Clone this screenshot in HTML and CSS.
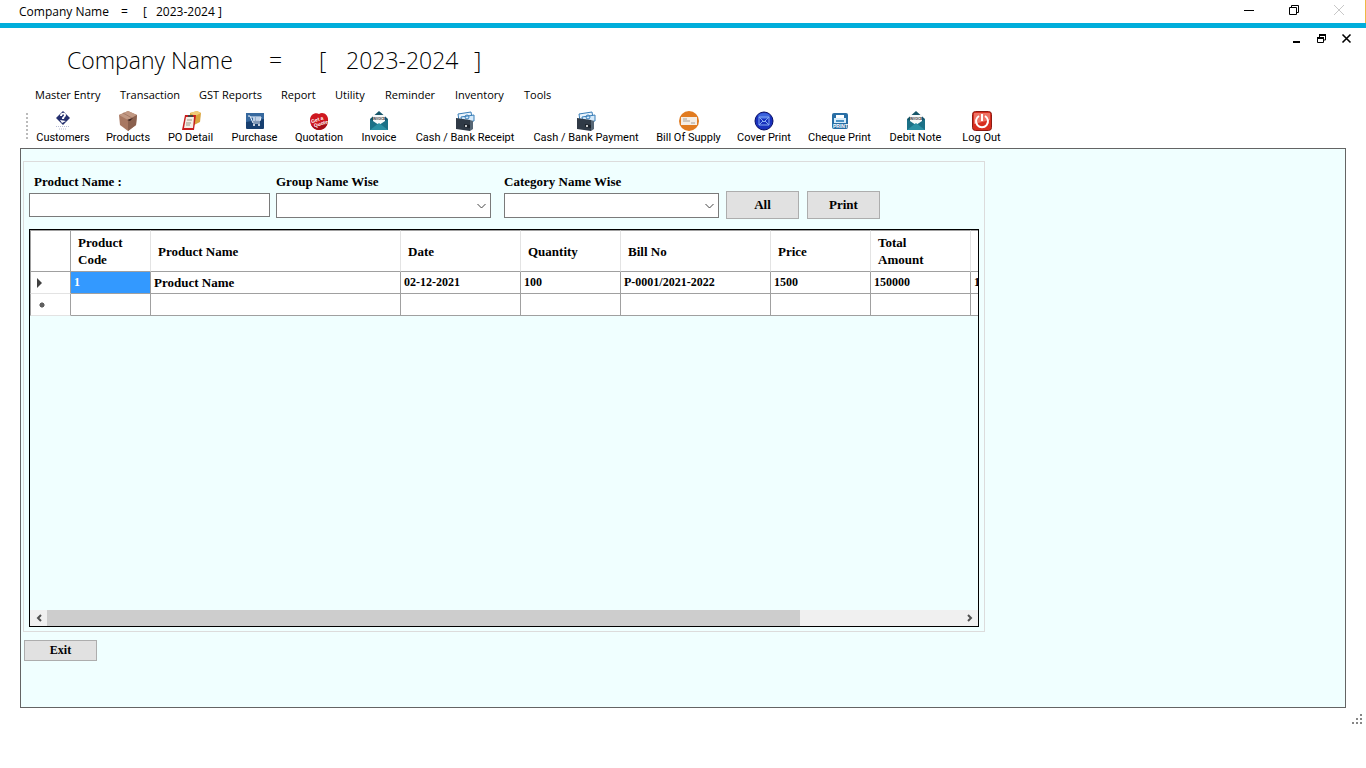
FILE: index.html
```html
<!DOCTYPE html>
<html lang="en">
<head>
    <meta charset="UTF-8">
    <meta name="viewport" content="width=device-width, initial-scale=1.0">
    <title>Company Name = [ 2023-2024 ]</title>
    <link rel="stylesheet" href="styles.css">
</head>
<body>
    <div class="titlebar">
        <div class="caption">
            <span>Company Name</span><span>=</span><span>[</span><span>2023-2024</span><span>]</span>
        </div>
        <div class="window-buttons">
            <button type="button" aria-label="Minimize"><svg width="12" height="12" viewBox="0 0 12 12"><path d="M1 6.500h10" stroke="#000" fill="none"/></svg></button>
            <button type="button" aria-label="Restore"><svg width="12" height="12" viewBox="0 0 12 12"><path d="M1.500 3.500h7v7h-7zM3.500 3.500v-2h7v7h-2" stroke="#000" fill="none"/></svg></button>
            <button type="button" aria-label="Close" disabled><svg width="12" height="12" viewBox="0 0 12 12"><path d="M1 1l10 10M11 1L1 11" stroke="#c8c8c8" fill="none"/></svg></button>
        </div>
    </div>

    <header>
        <div class="heading">
            <h1><span>Company Name</span><span>=</span><span>[</span><span>2023-2024</span><span>]</span></h1>
            <div class="child-buttons">
                <button type="button" aria-label="Minimize child"><svg width="11" height="11" viewBox="0 0 11 11"><path d="M2 9h7" stroke="#000" stroke-width="2"/></svg></button>
                <button type="button" aria-label="Restore child"><svg width="11" height="11" viewBox="0 0 11 11"><path d="M3.500 4V2h6v5H8M1.500 5v4.500h6V5" stroke="#000" fill="none"/><path d="M3 2h7M1 5h7" stroke="#000" stroke-width="2"/></svg></button>
                <button type="button" aria-label="Close child"><svg width="11" height="11" viewBox="0 0 11 11"><path d="M1.500 1.500l8 8M9.500 1.500l-8 8" stroke="#000" stroke-width="1.600"/></svg></button>
            </div>
        </div>

        <nav class="menu">
            <a href="#">Master Entry</a>
            <a href="#">Transaction</a>
            <a href="#">GST Reports</a>
            <a href="#">Report</a>
            <a href="#">Utility</a>
            <a href="#">Reminder</a>
            <a href="#">Inventory</a>
            <a href="#">Tools</a>
        </nav>

        <div class="toolbar">
            <span class="grip"></span>
            <button type="button">
                <svg viewBox="0 0 20 20"><path d="M10 0l7 7-7 7-7-7z" fill="#25306f"/><path d="M7 5c0-4 6-4 6-1 0 2-2 2-2 4H9c0-3 2-2 2-4-1-2-2 0-2 1zM7 9l6 1-4 2z" fill="#fff"/><path d="M3 15.500h14M6 18h8" stroke="#b8bdd4" stroke-dasharray="1 1"/></svg>
                Customers
            </button>
            <button type="button">
                <svg viewBox="0 0 20 20"><path d="M1 4l9-4 9 4-1 10-8 6-8-6z" fill="#a87862"/><path d="M1 4l9-4 9 4-9 5z" fill="#c19883"/><path d="M10 9l9-5-1 10-8 6z" fill="#8a604e"/><path d="M5 2l9 5" stroke="#a57a67"/><path d="M9 9l6-2-3 3" fill="#3b2520"/></svg>
                Products
            </button>
            <button type="button">
                <svg viewBox="0 0 20 20"><path d="M9 2l7-2 4 2-1 9-6 3-4-3z" fill="#d9a33c"/><path d="M9 2l7-2 4 2-6 3z" fill="#f0cc79"/><path d="M4 4h11l-2 15H1z" fill="#c71d1d"/><path d="M5 6h8l-1 11H3z" fill="#f4eee6"/><path d="M7 4h5v2H7z" fill="#444"/><path d="M6 9h5M5 12h5M5 14h4" stroke="#998"/></svg>
                PO Detail
            </button>
            <button type="button">
                <svg viewBox="0 0 20 20"><rect x="1" y="2" width="18" height="16" rx="1" fill="#173f70"/><path d="M1 2h18v6L1 11z" fill="#36689e"/><path d="M3 5h2l3 7h7M6 6h10l-1 4H8M8 8h8M9 6v4M12 6v4M14 6v4" stroke="#eef5ff" fill="none"/><circle cx="9" cy="14" r="1" fill="#fff"/><circle cx="14" cy="14" r="1" fill="#fff"/></svg>
                Purchase
            </button>
            <button type="button">
                <svg viewBox="0 0 20 20"><path d="M10 3C14 0 20 4 19 10c0 5-4 9-9 9S1 15 1 9c0-5 5-8 9-6z" fill="#cf1820"/><path d="M2 14c5 3 12-1 17-5 0 6-4 10-9 10-3 0-6-2-8-5z" fill="#a40e17"/><text x="2" y="11" class="badge-text" transform="rotate(-18 6 9)">Get a</text><text x="5" y="15" class="badge-text" transform="rotate(-18 10 14)">Quote</text></svg>
                Quotation
            </button>
            <button type="button">
                <svg viewBox="0 0 20 20"><path d="M1 8l9-8 9 8v11H1z" fill="#16566a"/><path d="M4 4h12v9H4z" fill="#f7f9f9"/><path d="M1 8l9 6 9-6v11H1z" fill="#1b7187"/><path d="M1 19l9-7 9 7z" fill="#2b90a4"/><text x="4" y="9" class="letter-text">INVOICE</text></svg>
                Invoice
            </button>
            <button type="button">
                <svg viewBox="0 0 20 20"><path d="M3 3l13-2 1 6-13 3z" fill="#eaf4fc" stroke="#397eb8"/><path d="M6 6l13-2v6L7 12z" fill="#d7ebfb" stroke="#397eb8"/><circle cx="12" cy="6" r="2" fill="none" stroke="#397eb8"/><path d="M1 7l14 2v11L1 18z" fill="#303a46"/><path d="M9 13l6 1v3l-6-1z" fill="#1b222a"/><circle cx="11" cy="15" r="1" fill="#fff"/><path d="M15 9l3 1v8l-3 2z" fill="#566675"/></svg>
                Cash / Bank Receipt
            </button>
            <button type="button">
                <svg viewBox="0 0 20 20"><path d="M3 3l13-2 1 6-13 3z" fill="#eaf4fc" stroke="#397eb8"/><path d="M6 6l13-2v6L7 12z" fill="#d7ebfb" stroke="#397eb8"/><circle cx="12" cy="6" r="2" fill="none" stroke="#397eb8"/><path d="M1 7l14 2v11L1 18z" fill="#303a46"/><path d="M9 13l6 1v3l-6-1z" fill="#1b222a"/><circle cx="11" cy="15" r="1" fill="#fff"/><path d="M15 9l3 1v8l-3 2z" fill="#566675"/></svg>
                Cash / Bank Payment
            </button>
            <button type="button">
                <svg viewBox="0 0 20 20"><circle cx="10" cy="10" r="10" fill="#e17b20"/><path d="M2 6h16v8H2z" fill="#f5ede4"/><path d="M4 8h4M4 10h7M12 12h4" stroke="#aaa096"/></svg>
                Bill Of Supply
            </button>
            <button type="button">
                <svg viewBox="0 0 20 20"><circle cx="10" cy="10" r="9" fill="#1830bd" stroke="#080f65"/><ellipse cx="10" cy="5" rx="6" ry="3" fill="#3a62dd"/><path d="M5 6h10v8H5zM5 6l5 5 5-5M5 14l4-4M15 14l-4-4" stroke="#85aaf2" fill="none"/></svg>
                Cover Print
            </button>
            <button type="button">
                <svg viewBox="0 0 20 20"><rect x="2" y="2" width="16" height="16" rx="2" fill="#286ea5"/><path d="M6 4h8v4H6z" fill="#fff"/><path d="M4 7h12v5H4z" fill="#d9eefb"/><path d="M6 9h8v2H6z" fill="#4b91c3"/><text x="3" y="17" class="print-text">PRINT</text></svg>
                Cheque Print
            </button>
            <button type="button">
                <svg viewBox="0 0 20 20"><path d="M1 8l9-8 9 8v11H1z" fill="#16566a"/><path d="M4 4h12v9H4z" fill="#f7f9f9"/><path d="M1 8l9 6 9-6v11H1z" fill="#1b7187"/><path d="M1 19l9-7 9 7z" fill="#2b90a4"/><text x="4" y="9" class="letter-text">INVOICE</text></svg>
                Debit Note
            </button>
            <button type="button">
                <svg viewBox="0 0 20 20"><rect x=".5" y=".5" width="19" height="19" rx="3" fill="#d72d1e" stroke="#8c1b13"/><path d="M2 2h16v7L2 13z" fill="#ee7365"/><path d="M7 5a6 6 0 1 0 6 0M10 3v7" stroke="#fff" stroke-width="2" fill="none"/></svg>
                Log Out
            </button>
        </div>
    </header>

    <main>
        <section class="group">
            <form class="filters">
                <div class="field">
                    <label for="product" class="indent">Product Name :</label>
                    <input type="text" id="product">
                </div>
                <div class="field">
                    <label for="group">Group Name Wise</label>
                    <div class="combo">
                        <select id="group"><option></option></select>
                        <svg width="9" height="6" viewBox="0 0 9 6"><path d="M.5 1l4 4 4-4" stroke="#444" fill="none"/></svg>
                    </div>
                </div>
                <div class="field category">
                    <label for="category">Category Name Wise</label>
                    <div class="combo">
                        <select id="category"><option></option></select>
                        <svg width="9" height="6" viewBox="0 0 9 6"><path d="M.5 1l4 4 4-4" stroke="#444" fill="none"/></svg>
                    </div>
                </div>
                <div class="actions">
                    <button type="button" class="btn">All</button>
                    <button type="button" class="btn">Print</button>
                </div>
            </form>

            <div class="grid">
                <div class="grid-body">
                    <table>
                        <colgroup>
                            <col class="c-mark"><col class="c-code"><col class="c-name"><col class="c-date"><col class="c-num"><col class="c-bill"><col class="c-num"><col class="c-num"><col class="c-num">
                        </colgroup>
                        <thead>
                            <tr>
                                <th></th>
                                <th>Product Code</th>
                                <th>Product Name</th>
                                <th>Date</th>
                                <th>Quantity</th>
                                <th>Bill No</th>
                                <th>Price</th>
                                <th>Total Amount</th>
                                <th></th>
                            </tr>
                        </thead>
                        <tbody>
                            <tr>
                                <td class="mark"><svg width="5" height="10" viewBox="0 0 5 10"><path d="M0 0l5 5-5 5z" fill="#404040"/></svg></td>
                                <td class="selected">1</td>
                                <td class="name">Product Name</td>
                                <td>02-12-2021</td>
                                <td>100</td>
                                <td>P-0001/2021-2022</td>
                                <td>1500</td>
                                <td>150000</td>
                                <td>1</td>
                            </tr>
                            <tr>
                                <td class="mark new"><svg width="6" height="6" viewBox="0 0 6 6"><circle cx="3" cy="3" r="2" fill="#404040"/><path d="M3 0v6M0 3h6M1 1l4 4M5 1L1 5" stroke="#606060"/></svg></td>
                                <td></td><td></td><td></td><td></td><td></td><td></td><td></td><td></td>
                            </tr>
                        </tbody>
                    </table>
                </div>
                <div class="scrollbar">
                    <button type="button" aria-label="Scroll left"><svg width="6" height="8" viewBox="0 0 6 8"><path d="M5 1L2 4l3 3" stroke="#505050" stroke-width="2" fill="none"/></svg></button>
                    <div class="track"><div class="thumb"></div></div>
                    <button type="button" aria-label="Scroll right"><svg width="6" height="8" viewBox="0 0 6 8"><path d="M1 1l3 3-3 3" stroke="#505050" stroke-width="2" fill="none"/></svg></button>
                </div>
            </div>
        </section>
        <button type="button" class="btn exit">Exit</button>
    </main>

    <footer>
        <svg width="10" height="10" viewBox="0 0 10 10"><path d="M8 0h2v2H8zM4 4h2v2H4zM8 4h2v2H8zM0 8h2v2H0zM4 8h2v2H4zM8 8h2v2H8z" fill="#868686"/></svg>
    </footer>
</body>
</html>
```
FILE: styles.css
```css
* {
    box-sizing: border-box;
}
body {
    margin: 0;
    min-height: 100vh;
    display: flex;
    flex-direction: column;
    background-color: white;
    color: black;
    font-family: "Open Sans", sans-serif;
    font-size: 12px;
}
button {
    font-family: inherit;
    color: inherit;
    border: none;
    background: none;
    padding: 0;
}
svg {
    display: block;
}

/* title bar */
.titlebar {
    display: flex;
    justify-content: space-between;
    height: 23px;
    padding-left: 19px;
    border-right: 1px solid #eeb944;
}
.caption {
    display: grid;
    grid-template-columns: 102px 22px 13px 62px auto;
    line-height: 23px;
}
.window-buttons {
    display: flex;
    gap: 33px;
    padding-right: 20px;
    height: 20px;
    align-items: center;
}

/* heading, menu and toolbar */
header {
    border-top: 5px solid #00aedb;
}
.heading {
    display: flex;
    justify-content: space-between;
    height: 57px;
    padding: 5px 14px 0 67px;
}
h1 {
    display: grid;
    grid-template-columns: 202px 50px 27px 128px auto;
    margin: 0;
    font-size: 23px;
    font-weight: 300;
    line-height: 55px;
}
.child-buttons {
    display: flex;
    gap: 14px;
    align-items: flex-start;
}
.menu {
    display: grid;
    grid-template-columns: 85px 79px 82px 54px 50px 70px 69px auto;
    padding-left: 35px;
    font-size: 11px;
    line-height: 20px;
}
.menu a {
    color: black;
    text-decoration: none;
    white-space: nowrap;
}
.toolbar {
    display: grid;
    grid-template-columns: 2px 70px 60px 65px 63px 66px 54px 118px 124px 81px 70px 81px 71px 61px;
    padding: 6px 0 3px 26px;
    height: 43px;
}
.toolbar button {
    display: flex;
    flex-direction: column;
    align-items: center;
    font-family: Roboto, sans-serif;
    font-size: 11px;
    line-height: 14px;
    white-space: nowrap;
}
.toolbar svg {
    width: 20px;
    height: 20px;
}
.grip {
    height: 26px;
    margin-top: 2px;
    background: repeating-linear-gradient(#bbb 0 2px, transparent 2px 4px);
}
.badge-text, .letter-text, .print-text {
    font-family: "Liberation Sans", Arial, sans-serif;
    font-weight: bold;
}
.badge-text {
    font-size: 5px;
    fill: white;
}
.letter-text {
    font-size: 3px;
    fill: #222;
}
.print-text {
    font-size: 5px;
    fill: white;
}

/* work area */
main {
    flex: 1;
    display: flex;
    flex-direction: column;
    margin: 0 20px;
    padding: 12px 360px 46px 2px;
    border: 1px solid #646464;
    background-color: azure;
    font-family: "Liberation Serif", serif;
    font-weight: bold;
    font-size: 13px;
}
.group {
    flex: 1;
    display: flex;
    flex-direction: column;
    padding: 12px 5px 4px;
    border: 1px solid #dcdcdc;
}
.filters {
    display: flex;
    gap: 6px;
    height: 55px;
}
.field {
    width: 215px;
}
.field:first-child {
    width: 241px;
}
.category {
    margin-left: 7px;
}
.field label {
    display: block;
    height: 19px;
    line-height: 16px;
}
.field .indent {
    padding-left: 5px;
}
.field input, .field select {
    width: 100%;
    height: 24px;
    border: 1px solid #7a7a7a;
    border-radius: 0;
    background-color: white;
}
.field select {
    height: 25px;
    appearance: none;
}
.combo {
    display: grid;
    align-items: center;
}
.combo > * {
    grid-area: 1 / 1;
}
.combo svg {
    justify-self: end;
    margin-right: 5px;
    pointer-events: none;
}
.actions {
    display: flex;
    gap: 8px;
    padding: 17px 0 0 1px;
}
.btn {
    width: 73px;
    height: 28px;
    border: 1px solid #adadad;
    background-color: #e1e1e1;
    font-size: 13px;
    font-weight: bold;
}
.exit {
    height: 21px;
    margin: 8px 0 0 1px;
    font-size: 12px;
}

/* product grid */
.grid {
    flex: 1;
    display: flex;
    flex-direction: column;
    border: 1px solid black;
}
.grid-body {
    flex: 1;
    overflow: hidden;
}
table {
    width: 1041px;
    table-layout: fixed;
    border-collapse: separate;
    border-spacing: 0;
}
.c-mark { width: 41px; }
.c-code { width: 80px; }
.c-name { width: 250px; }
.c-date { width: 120px; }
.c-num { width: 100px; }
.c-bill { width: 150px; }
th, td {
    border-right: 1px solid #a0a0a0;
    border-bottom: 1px solid #a0a0a0;
    background-color: white;
    text-align: left;
}
th {
    height: 42px;
    padding: 0 20px 0 7px;
    border-top: 1px solid #a0a0a0;
    border-right-color: #e3e3e3;
    line-height: 17px;
}
th:nth-child(3) {
    padding-right: 7px;
}
th:first-child {
    border-right-color: #a0a0a0;
}
th:first-child, .mark {
    border-left: 1px solid #a0a0a0;
}
td {
    height: 22px;
    padding: 0 3px;
    font-size: 12px;
}
td.name {
    font-size: 13px;
}
td.mark {
    padding-left: 6px;
    border-bottom-color: #e3e3e3;
}
td.new {
    padding-left: 8px;
}
.selected {
    background-color: #3399ff;
    color: white;
}
.scrollbar {
    display: flex;
    height: 16px;
    background-color: #f0f0f0;
}
.scrollbar button {
    width: 17px;
    display: grid;
    place-items: center;
}
.track {
    flex: 1;
}
.thumb {
    width: 82.4%;
    height: 100%;
    background-color: #cdcdcd;
}

footer {
    height: 60px;
    display: flex;
    justify-content: flex-end;
    padding: 6px 4px 0 0;
}
```
